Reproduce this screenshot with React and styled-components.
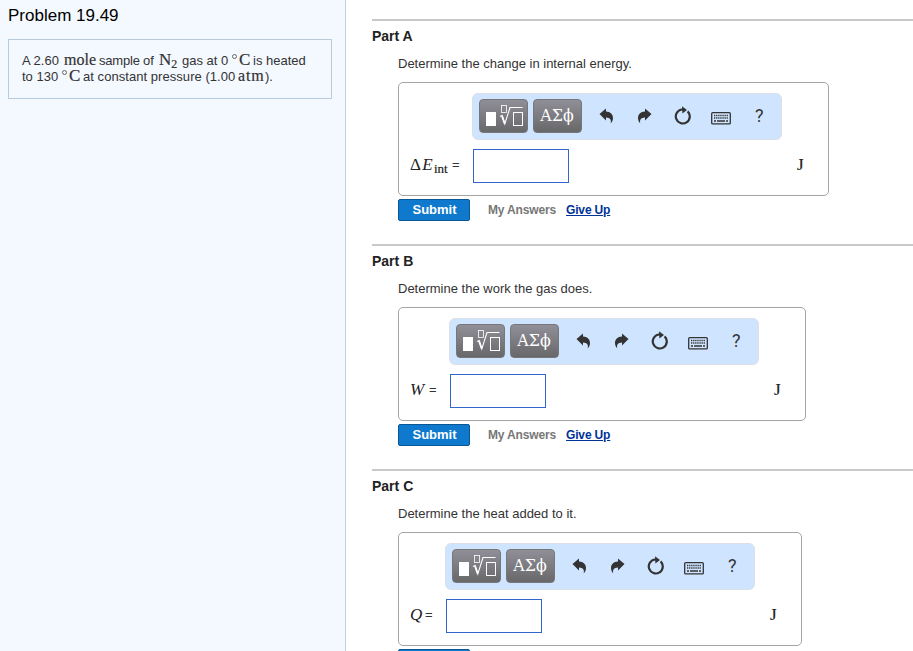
import React from "react";
import styled, { createGlobalStyle } from "styled-components";

const GlobalStyle = createGlobalStyle`
  * {
    box-sizing: border-box;
  }

  body {
    margin: 0;
    background: #fff;
    color: #333;
    font-family: "Liberation Sans", Arial, sans-serif;
    font-size: 12px;
  }
`;

const Page = styled.div`
  display: flex;
  height: 651px;
  overflow: hidden;
`;

const Sidebar = styled.aside`
  flex: none;
  width: 346px;
  padding: 7px 13px 0 8px;
  background: #f4f8ff;
  border-right: 1px solid #c5cfda;
`;

const Title = styled.h1`
  margin: 0 0 14px;
  color: #000;
  font-size: 17px;
  font-weight: normal;
  line-height: 18px;
`;

const Statement = styled.div`
  height: 60px;
  padding: 13px 13px;
  border: 1px solid #b8cbdc;
  line-height: 16px;
  white-space: nowrap;
`;

const Line = styled.div`
  display: flex;
  align-items: baseline;
  height: 16px;
  font-size: 13px;
`;

const Run = styled.span`
  flex: none;
  width: ${(props) => props.$width}px;
  letter-spacing: ${(props) => props.$spacing || 0}px;
`;

const MathRun = styled(Run)`
  font-family: "Liberation Serif", "Times New Roman", serif;
  font-size: ${(props) => props.$size || 15}px;
  line-height: 14px;
  -webkit-text-stroke: 0.2px #333;

  sub {
    font-size: 12px;
    line-height: 0;
    vertical-align: -3px;
  }
`;

const Degree = styled.span`
  display: inline-block;
  width: 5px;
  height: 5px;
  margin: 0 2px 0 1px;
  border: 1px solid #666;
  border-radius: 50%;
  vertical-align: 6px;
`;

const Main = styled.main`
  flex: 1;
  padding: 19px 0 0 26px;
`;

const Section = styled.section`
  height: 225px;
  border-top: 2px solid #c9c9c9;
`;

const PartTitle = styled.h2`
  margin: 0;
  padding-top: 7px;
  color: #222;
  font-size: 14px;
  line-height: 16px;
`;

const PartBody = styled.div`
  padding-left: 26px;
`;

const Question = styled.p`
  margin: 12px 0 10px;
  font-size: 13px;
  line-height: 16px;
`;

const AnswerBox = styled.div`
  width: ${(props) => props.$indent + 358}px;
  height: 114px;
  padding: 10px 0 0;
  border: 1px solid #a5a5a5;
  border-radius: 5px;
`;

const Toolbar = styled.div`
  display: flex;
  align-items: center;
  width: 310px;
  height: 47px;
  margin-left: ${(props) => props.$indent}px;
  padding: 0 0 1px 6px;
  background: #cfe5ff;
  border: 1px solid #dce0e6;
  border-radius: 6px;
`;

const MathButton = styled.button`
  display: flex;
  align-items: center;
  justify-content: center;
  flex: none;
  width: 49px;
  height: 34px;
  margin: 0 5px 0 0;
  padding: 0 1px 1px 0;
  color: #fff;
  background: linear-gradient(#908f98, #68686a);
  border: 1px solid #77777a;
  border-radius: 4px;
  font-family: "DejaVu Serif", serif;
  font-size: 15.8px;
`;

const Tool = styled.span`
  display: flex;
  align-items: center;
  justify-content: center;
  flex: none;
  width: 38.3px;
  height: 34px;
  padding-top: ${(props) => props.$drop || 0}px;
  color: #333;
  font-family: Roboto, sans-serif;
  font-size: 18px;
  line-height: 20px;
`;

const AnswerRow = styled.div`
  display: flex;
  align-items: center;
  height: 34px;
  margin-top: 9px;
`;

const Label = styled.label`
  display: flex;
  align-items: baseline;
  width: ${(props) => props.$indent + 1}px;
  padding: 0 0 2px 11px;
  font-size: 13px;
  white-space: nowrap;
`;

const Symbol = styled.span`
  flex: none;
  width: ${(props) => props.$width}px;
  color: #222;
  font-family: "Liberation Serif", "Times New Roman", serif;
  font-size: 17px;
  line-height: 20px;
  letter-spacing: ${(props) => props.$spacing || 0}px;

  sub {
    font-size: 13px;
    line-height: 0;
    vertical-align: -3px;
    letter-spacing: 0;
    -webkit-text-stroke: 0.2px #222;
  }
`;

const Equals = styled.span`
  position: relative;
  top: -1px;
`;

const Input = styled.input`
  width: 96px;
  height: 34px;
  padding: 0 6px;
  background: #fff;
  border: 1px solid #3366cc;
  outline: none;
`;

const Unit = styled.span`
  margin-left: 228px;
  padding-bottom: 3px;
  color: #222;
  font-family: "Liberation Serif", "Times New Roman", serif;
  font-size: 17px;
  -webkit-text-stroke: 0.2px #222;
`;

const Actions = styled.div`
  display: flex;
  align-items: center;
  margin-top: 3px;
  font-weight: bold;
`;

const Submit = styled.button`
  width: 72px;
  height: 22px;
  margin: 0;
  padding: 0 0 1px 1px;
  color: #fff;
  background: #0f7acd;
  border: 1px solid #0b5793;
  border-radius: 2px;
  font: bold 13px "Liberation Sans", Arial, sans-serif;
`;

const MyAnswers = styled.span`
  width: 78px;
  margin-left: 18px;
  color: #777;
  letter-spacing: -0.15px;
`;

const GiveUp = styled.a`
  color: #003399;
  text-decoration: underline;
  letter-spacing: -0.15px;
`;

const TemplateIcon = () => (
  <svg width="39" height="24" viewBox="0 0 39 24" fill="none" stroke="#fff">
    <rect x="2" y="8" width="10" height="14" fill="#fff" stroke="none" />
    <rect x="17.5" y="1.5" width="5" height="7" strokeWidth="0.8" />
    <path d="M16 12.5l2.2-1 2.6 8.5L26 3.5h12.5" strokeWidth="1.1" />
    <path d="M18 12l2.6 7.5" strokeWidth="1.8" />
    <rect x="29.5" y="8.5" width="9" height="13" strokeWidth="1" />
  </svg>
);

const UndoIcon = ({ flip }) => (
  <svg width="15" height="16" viewBox="0 0 15 16" fill="#333">
    <path
      transform={flip ? "translate(15 0) scale(-1 1)" : undefined}
      d="M.5 6L7 .5v3.1c4.6.1 7 3.1 7 6.4 0 2.1-.8 4-2.3 5.5.8-3.6-.4-6-4.7-6.1v3z"
    />
  </svg>
);

const ResetIcon = () => (
  <svg width="18" height="20" viewBox="0 0 18 20" fill="none">
    <path
      d="M13.6 5.4a7 7 0 1 1-5.4-1.9h1.3"
      stroke="#333"
      strokeWidth="2.2"
    />
    <path d="M8 .3l5 3.6-4.6 3.5z" fill="#333" />
  </svg>
);

const KeyboardIcon = () => (
  <svg width="20" height="13" viewBox="0 0 20 13" fill="none">
    <rect x=".7" y=".7" width="18.6" height="11.2" rx="1" stroke="#333" strokeWidth="1.3" />
    <path d="M3 3.5h14M3 6h14" stroke="#333" strokeWidth="1.5" strokeDasharray="1.3 .8" />
    <path d="M3 9h2M6 9h8M15 9h2" stroke="#333" strokeWidth="1.5" />
  </svg>
);

const parts = [
  {
    name: "A",
    question: "Determine the change in internal energy.",
    symbol: (
      <>
        Δ<i>E</i>
        <sub>int</sub>
      </>
    ),
    symbolWidth: 42,
    symbolSpacing: 1.3,
    indent: 73,
  },
  {
    name: "B",
    question: "Determine the work the gas does.",
    symbol: <i>W</i>,
    symbolWidth: 19,
    indent: 50,
  },
  {
    name: "C",
    question: "Determine the heat added to it.",
    symbol: <i>Q</i>,
    symbolWidth: 15,
    indent: 46,
  },
];

const Part = ({ part }) => {
  return (
    <Section>
      <PartTitle>Part {part.name}</PartTitle>
      <PartBody>
        <Question>{part.question}</Question>
        <AnswerBox $indent={part.indent}>
          <Toolbar $indent={part.indent}>
            <MathButton>
              <TemplateIcon />
            </MathButton>
            <MathButton>ΑΣϕ</MathButton>
            <Tool>
              <UndoIcon />
            </Tool>
            <Tool>
              <UndoIcon flip />
            </Tool>
            <Tool>
              <ResetIcon />
            </Tool>
            <Tool $drop={4}>
              <KeyboardIcon />
            </Tool>
            <Tool>?</Tool>
          </Toolbar>
          <AnswerRow>
            <Label $indent={part.indent} htmlFor={`answer-${part.name}`}>
              <Symbol $width={part.symbolWidth} $spacing={part.symbolSpacing}>
                {part.symbol}
              </Symbol>
              <Equals>=</Equals>
            </Label>
            <Input id={`answer-${part.name}`} />
            <Unit>J</Unit>
          </AnswerRow>
        </AnswerBox>
        <Actions>
          <Submit>Submit</Submit>
          <MyAnswers>My Answers</MyAnswers>
          <GiveUp>Give Up</GiveUp>
        </Actions>
      </PartBody>
    </Section>
  );
};

function App() {
  return (
    <Page>
      <GlobalStyle />
      <Sidebar>
        <Title>Problem 19.49</Title>
        <Statement>
          <Line>
            <Run $width={42}>A 2.60</Run>
            <MathRun $width={35} $size={16}>mole</MathRun>
            <Run $width={60} $spacing={-0.2}>sample of</Run>
            <MathRun $width={23} $size={17}>
              N<sub>2</sub>
            </MathRun>
            <Run $width={49}>gas at 0</Run>
            <MathRun $width={22} $size={17}>
              <Degree />C
            </MathRun>
            <Run $width={55}>is heated</Run>
          </Line>
          <Line>
            <Run $width={39}>to 130</Run>
            <MathRun $width={22} $size={17}>
              <Degree />C
            </MathRun>
            <Run $width={155} $spacing={0.05}>at constant pressure (1.00</Run>
            <MathRun $width={27} $size={16} $spacing={0.8}>atm</MathRun>
            <span>).</span>
          </Line>
        </Statement>
      </Sidebar>
      <Main>
        {parts.map((part) => (
          <Part key={part.name} part={part} />
        ))}
      </Main>
    </Page>
  );
}

export default App;
